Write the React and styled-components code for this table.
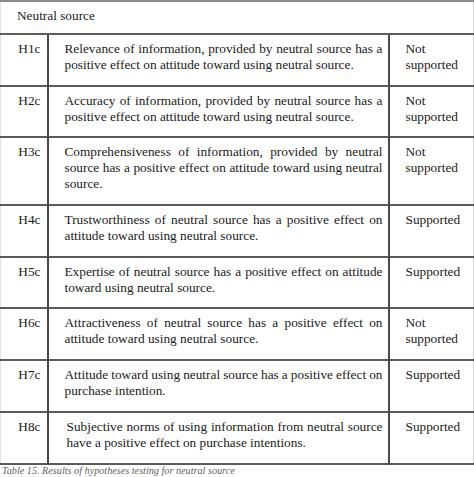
import React from "react"
import styled, { createGlobalStyle } from "styled-components"

const GlobalStyle = createGlobalStyle`
  body {
    margin: 0;
    background: #ffffff;
  }
`

const Page = styled.div`
  width: 474px;
  height: 477px;
  background: #ffffff;
  font-family: "Liberation Serif", "Times New Roman", serif;
  color: #1e1e1e;
  overflow: hidden;
`

const Table = styled.table`
  width: 473px;
  border-collapse: collapse;
  table-layout: fixed;
  border-left: 1px solid #e2e2e2;
  border-right: 1px solid #d6d6d6;
  font-family: "Liberation Serif", "Times New Roman", serif;
  font-size: 13.3px;
  line-height: 16px;
  color: #1a1a1a;
`

const Col = styled.col`
  width: ${(p) => p.$width}px;
`

const HeaderCell = styled.td`
  border-top: 2px solid #8a8a8a;
  border-bottom: 2px solid #5e5e5e;
  padding: 6px 0 9px 16px;
  height: 16px;
`

const Row = styled.tr`
  border-bottom: 2px solid #5a5a5a;
`

const IdCell = styled.td`
  text-align: right;
  vertical-align: top;
  padding: 6px 6px 11.7px 0;
  border-right: 2px solid #4a4a4a;
`

const TextCell = styled.td`
  vertical-align: top;
  padding: 6px 5px 11.7px ${(p) => (p.$indent ? 18 : 16)}px;
  border-right: 2px solid #4a4a4a;
`

const Line = styled.span`
  display: block;
  text-align: justify;
  text-align-last: ${(p) => (p.$last ? "left" : "justify")};
  white-space: nowrap;
  word-spacing: ${(p) => (p.$last ? 0 : -0.5)}px;
`

const StatusCell = styled.td`
  vertical-align: top;
  padding: 6px 0 11.7px 16px;
`

const Caption = styled.div`
  font-family: "Liberation Serif", "Times New Roman", serif;
  font-style: italic;
  font-size: 10.2px;
  line-height: 12px;
  color: #5f5f5f;
  padding: 0 0 0 2px;
`

const rows = [
  {
    id: "H1c",
    lines: [
      "Relevance of information, provided by neutral source has a",
      "positive effect on attitude toward using neutral source.",
    ],
    status: ["Not", "supported"],
  },
  {
    id: "H2c",
    lines: [
      "Accuracy of information, provided by neutral source has a",
      "positive effect on attitude toward using neutral source.",
    ],
    status: ["Not", "supported"],
  },
  {
    id: "H3c",
    lines: [
      "Comprehensiveness of information, provided by neutral",
      "source has a positive effect on attitude toward using neutral",
      "source.",
    ],
    status: ["Not", "supported"],
  },
  {
    id: "H4c",
    lines: [
      "Trustworthiness of neutral source has a positive effect on",
      "attitude toward using neutral source.",
    ],
    status: ["Supported"],
  },
  {
    id: "H5c",
    lines: [
      "Expertise of neutral source has a positive effect on attitude",
      "toward using neutral source.",
    ],
    status: ["Supported"],
  },
  {
    id: "H6c",
    lines: [
      "Attractiveness of neutral source has a positive effect on",
      "attitude toward using neutral source.",
    ],
    status: ["Not", "supported"],
  },
  {
    id: "H7c",
    lines: [
      "Attitude toward using neutral source has a positive effect on",
      "purchase intention.",
    ],
    status: ["Supported"],
  },
  {
    id: "H8c",
    lines: [
      "Subjective norms of using information from neutral source",
      "have a positive effect on purchase intentions.",
    ],
    status: ["Supported"],
    indent: true,
  },
]

function App() {
  return (
    <Page>
      <GlobalStyle />
      <Table>
        <colgroup>
          <Col $width={47} />
          <Col $width={341} />
          <Col $width={85} />
        </colgroup>
        <tbody>
          <tr>
            <HeaderCell colSpan={3}>Neutral source</HeaderCell>
          </tr>
          {rows.map((row) => (
            <Row key={row.id}>
              <IdCell>{row.id}</IdCell>
              <TextCell $indent={row.indent}>
                {row.lines.map((line, i) => (
                  <Line key={i} $last={i === row.lines.length - 1}>
                    {line}
                  </Line>
                ))}
              </TextCell>
              <StatusCell>
                {row.status.map((s) => (
                  <Line key={s} $last>
                    {s}
                  </Line>
                ))}
              </StatusCell>
            </Row>
          ))}
        </tbody>
      </Table>
      <Caption>Table 15. Results of hypotheses testing for neutral source</Caption>
    </Page>
  )
}

export default App
